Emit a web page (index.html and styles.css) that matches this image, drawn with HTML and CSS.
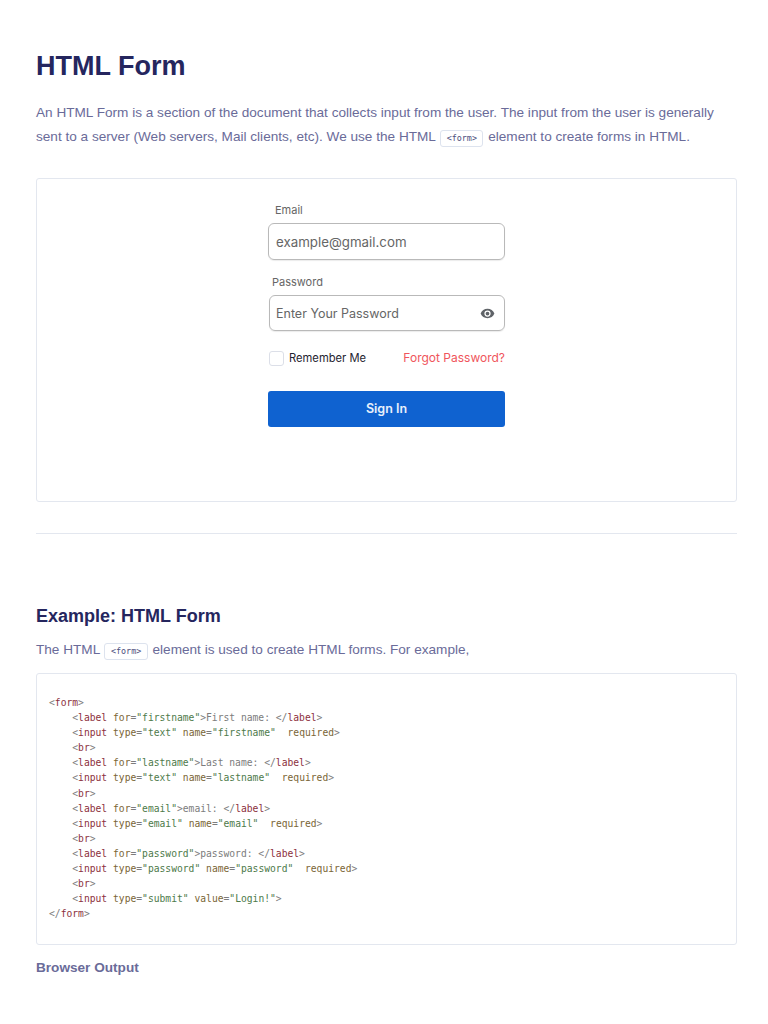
FILE: index.html
```html
<!DOCTYPE html>
<html lang="en">
<head>
<meta charset="utf-8">
<title>HTML Form</title>
<link rel="stylesheet" href="styles.css">
</head>
<body>
<main class="page">
  <h1 class="title">HTML Form</h1>
  <p class="text intro">An HTML Form is a section of the document that collects input from the user. The input from the user is generally sent to a server (Web servers, Mail clients, etc). We use the HTML <code class="tag">&lt;form&gt;</code> element to create forms in HTML.</p>

  <section class="demo">
    <form class="login">
      <div class="label label-email">Email</div>
      <div class="field field-email">example@gmail.com</div>
      <div class="label label-password">Password</div>
      <div class="field field-password">
        <span>Enter Your Password</span>
        <svg class="eye" viewBox="0 0 24 24" width="15" height="15" aria-hidden="true"><path fill="#5f6368" d="M12 4.5C7 4.5 2.7 7.6 1 12c1.7 4.4 6 7.5 11 7.5s9.3-3.1 11-7.5c-1.7-4.4-6-7.5-11-7.5zM12 17a5 5 0 1 1 0-10 5 5 0 0 1 0 10zm0-8a3 3 0 1 0 0 6 3 3 0 0 0 0-6z"/></svg>
      </div>
      <div class="options">
        <span class="remember"><span class="check"></span>Remember Me</span>
        <span class="forgot">Forgot Password?</span>
      </div>
      <div class="submit">Sign In</div>
    </form>
  </section>

  <hr class="rule">

  <h2 class="subtitle">Example: HTML Form</h2>
  <p class="text lead">The HTML <code class="tag">&lt;form&gt;</code> element is used to create HTML forms. For example,</p>

  <pre class="code"><span class="p">&lt;</span><span class="k">form</span><span class="p">&gt;</span>
    <span class="p">&lt;</span><span class="k">label</span> <span class="a">for</span><span class="p">=</span><span class="s">"firstname"</span><span class="p">&gt;First name: &lt;/</span><span class="k">label</span><span class="p">&gt;</span>
    <span class="p">&lt;</span><span class="k">input</span> <span class="a">type</span><span class="p">=</span><span class="s">"text"</span> <span class="a">name</span><span class="p">=</span><span class="s">"firstname"</span>  <span class="a">required</span><span class="p">&gt;</span>
    <span class="p">&lt;</span><span class="k">br</span><span class="p">&gt;</span>
    <span class="p">&lt;</span><span class="k">label</span> <span class="a">for</span><span class="p">=</span><span class="s">"lastname"</span><span class="p">&gt;Last name: &lt;/</span><span class="k">label</span><span class="p">&gt;</span>
    <span class="p">&lt;</span><span class="k">input</span> <span class="a">type</span><span class="p">=</span><span class="s">"text"</span> <span class="a">name</span><span class="p">=</span><span class="s">"lastname"</span>  <span class="a">required</span><span class="p">&gt;</span>
    <span class="p">&lt;</span><span class="k">br</span><span class="p">&gt;</span>
    <span class="p">&lt;</span><span class="k">label</span> <span class="a">for</span><span class="p">=</span><span class="s">"email"</span><span class="p">&gt;email: &lt;/</span><span class="k">label</span><span class="p">&gt;</span>
    <span class="p">&lt;</span><span class="k">input</span> <span class="a">type</span><span class="p">=</span><span class="s">"email"</span> <span class="a">name</span><span class="p">=</span><span class="s">"email"</span>  <span class="a">required</span><span class="p">&gt;</span>
    <span class="p">&lt;</span><span class="k">br</span><span class="p">&gt;</span>
    <span class="p">&lt;</span><span class="k">label</span> <span class="a">for</span><span class="p">=</span><span class="s">"password"</span><span class="p">&gt;password: &lt;/</span><span class="k">label</span><span class="p">&gt;</span>
    <span class="p">&lt;</span><span class="k">input</span> <span class="a">type</span><span class="p">=</span><span class="s">"password"</span> <span class="a">name</span><span class="p">=</span><span class="s">"password"</span>  <span class="a">required</span><span class="p">&gt;</span>
    <span class="p">&lt;</span><span class="k">br</span><span class="p">&gt;</span>
    <span class="p">&lt;</span><span class="k">input</span> <span class="a">type</span><span class="p">=</span><span class="s">"submit"</span> <span class="a">value</span><span class="p">=</span><span class="s">"Login!"</span><span class="p">&gt;</span>
<span class="p">&lt;/</span><span class="k">form</span><span class="p">&gt;</span></pre>

  <h3 class="output">Browser Output</h3>
</main>
</body>
</html>
```
FILE: styles.css
```css
html, body { margin: 0; padding: 0; background: #fff; }
body { font-family: "Liberation Sans", Arial, sans-serif; }
.page { padding: 0 31px 0 36px; }
.title { margin: 0; padding-top: 49px; font-size: 27px; line-height: 34px; font-weight: 700; color: #25265e; }
.text { margin: 0; font-size: 13.6px; line-height: 24px; color: #6a6b99; }
.intro { margin-top: 18px; }
.tag { display: inline-block; margin: 0 1px; padding: 0 5.5px; border: 1px solid #dde3ee; border-radius: 3px; font-family: "DejaVu Sans Mono", monospace; font-size: 8.4px; line-height: 15px; color: #4d4f7d; vertical-align: 0; }
.demo { margin-top: 29px; height: 324px; box-sizing: border-box; border: 1px solid #e3e7ef; border-radius: 3px; padding-top: 24px; display: flex; justify-content: center; }
.login { width: 237px; font-family: "Inter", sans-serif; }
.label { font-size: 11px; line-height: 14px; color: #666; }
.label-email { padding-left: 7px; }
.label-password { margin-top: 15px; padding-left: 4px; }
.field { display: flex; align-items: center; justify-content: space-between; box-sizing: border-box; margin-top: 6px; padding: 0 9px 0 7px; border: 1px solid #b9b9b9; border-radius: 6px; color: #666; box-shadow: 0 1px 1px rgba(0,0,0,.08); }
.field-email { height: 37px; font-size: 13.3px; }
.field-password { height: 36px; margin-left: 1px; padding-left: 6px; font-size: 12.5px; }
.eye { display: block; }
.options { display: flex; align-items: center; justify-content: space-between; margin-top: 19px; height: 16px; }
.remember { display: flex; align-items: center; gap: 5px; margin-left: 1px; font-size: 11.2px; color: #1f2430; }
.check { box-sizing: border-box; width: 15px; height: 15px; border: 1px solid #dcdfe8; border-radius: 3px; }
.forgot { padding-bottom: 2px; font-size: 12px; color: #f0555c; }
.submit { margin-top: 25px; height: 36px; box-sizing: border-box; padding-bottom: 2px; display: flex; align-items: center; justify-content: center; background: #0f62d0; border-radius: 3px; color: #e8f0fb; font-size: 12.5px; font-weight: 600; }
.rule { margin: 31px 0 0; border: 0; border-top: 1px solid #e3e7ef; }
.subtitle { margin: 0; padding-top: 71px; font-size: 18px; line-height: 22px; font-weight: 700; color: #25265e; }
.lead { margin-top: 11px; }
.code { margin: 11px 0 0; height: 272px; box-sizing: border-box; padding: 21px 12px 0; border: 1px solid #e3e7ef; border-radius: 3px; font-family: "DejaVu Sans Mono", monospace; font-size: 9.66px; line-height: 15.1px; color: #777; overflow: hidden; }
.p { color: #7c7c7c; }
.k { color: #8c2f3c; }
.a { color: #7a6535; }
.s { color: #4d7a4a; }
.output { margin: 14px 0 0; font-size: 13.6px; line-height: 18px; font-weight: 700; color: #6a6b99; }
```
